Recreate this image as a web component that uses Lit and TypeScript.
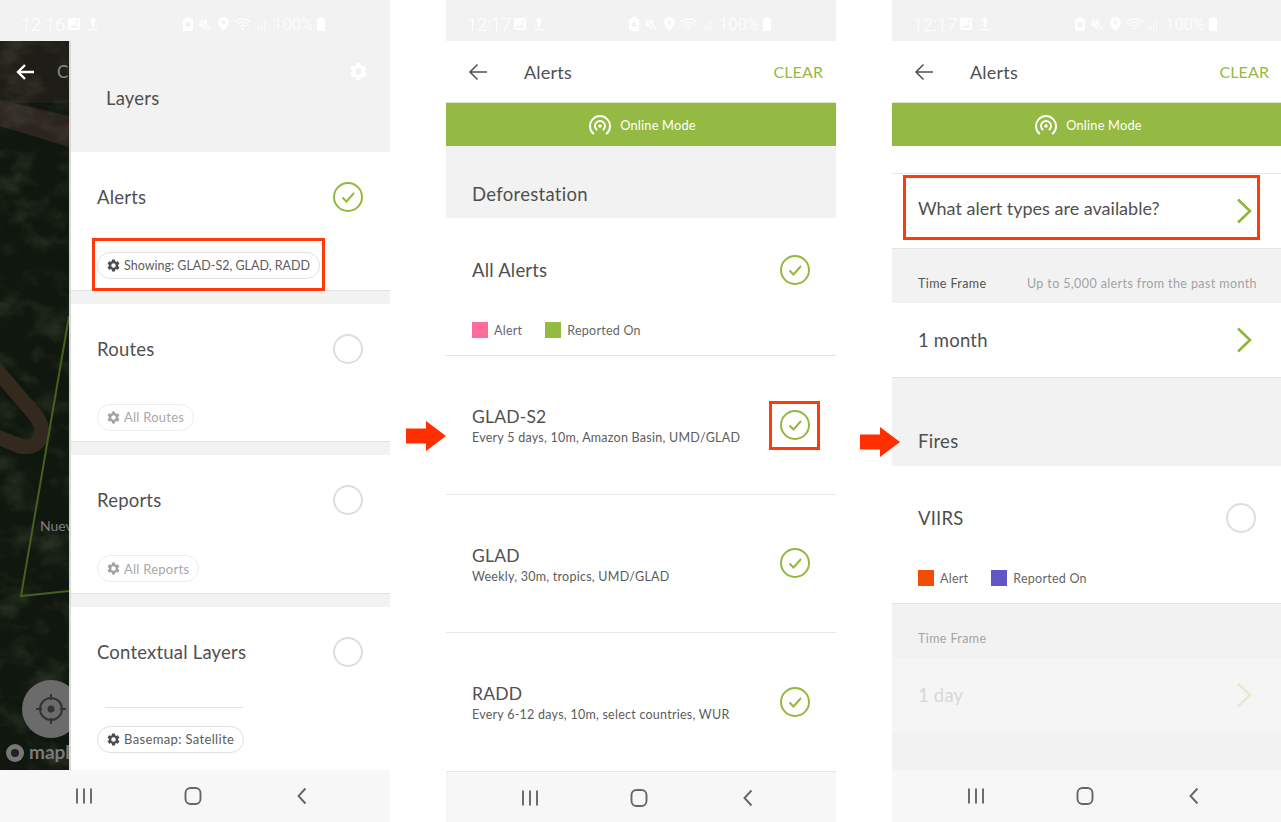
import { LitElement, html, css, svg } from "lit";
import { customElement } from "lit/decorators.js";

const GEAR = "M19.14 12.94c.04-.3.06-.61.06-.94s-.02-.64-.07-.94l2.03-1.58a.5.5 0 0 0 .12-.64l-1.92-3.32a.5.5 0 0 0-.59-.22l-2.39.96a7 7 0 0 0-1.62-.94l-.36-2.54a.48.48 0 0 0-.48-.41h-3.84a.48.48 0 0 0-.47.41l-.36 2.54c-.59.24-1.13.57-1.62.94l-2.39-.96a.49.49 0 0 0-.59.22L2.72 8.84a.48.48 0 0 0 .12.64l2.03 1.58c-.05.3-.09.63-.09.94s.02.64.07.94l-2.03 1.58a.5.5 0 0 0-.12.64l1.92 3.32c.12.22.37.29.59.22l2.39-.96c.5.38 1.03.7 1.62.94l.36 2.54c.05.24.24.41.48.41h3.84c.24 0 .44-.17.47-.41l.36-2.54c.59-.24 1.13-.56 1.62-.94l2.39.96c.22.08.47 0 .59-.22l1.92-3.32a.48.48 0 0 0-.12-.64l-2.01-1.58zM12 15.6A3.6 3.6 0 1 1 12 8.4a3.6 3.6 0 0 1 0 7.2z";

const gear = (cls: string) => html`<svg class=${cls} viewBox="0 0 24 24"><path d=${GEAR} fill="currentColor"></path></svg>`;

const statusBar = (time: string) => html`
  <div class="status">
    <span class="time">${time}</span>
    <svg class="si" style="width:12px" viewBox="0 0 12 12"><path fill-rule="evenodd" d="M1.5 0h9A1.5 1.5 0 0 1 12 1.500v9a1.500 1.500 0 0 1-1.500 1.500h-9A1.500 1.500 0 0 1 0 10.500v-9A1.500 1.500 0 0 1 1.500 0zM1.500 9.800h9L7.600 5.800 5.400 8.400 4 6.800zM9 2a1.200 1.200 0 1 0 0 2.400A1.200 1.200 0 0 0 9 2z" fill="#fff" fill-opacity=".9"></path></svg>
    <svg class="si up" viewBox="0 0 10 14"><path d="M5 0l4 4.500H6.400V10H3.600V4.500H1zM0 12h10v1.200H0z" fill="#fff" fill-opacity=".9"></path></svg>
    <span class="grow"></span>
    <svg class="si" style="width:10px;height:14px" viewBox="0 0 10 14"><path fill-rule="evenodd" d="M3 0h4v1.500h1.500A1.500 1.500 0 0 1 10 3v9.500A1.500 1.500 0 0 1 8.500 14h-7A1.500 1.500 0 0 1 0 12.500V3a1.500 1.500 0 0 1 1.500-1.500H3zM5 5a2.500 2.500 0 1 0 0 5 2.500 2.500 0 0 0 0-5z" fill="#fff" fill-opacity=".9"></path></svg>
    <svg class="si" style="width:13px;height:13px;margin-left:6px" viewBox="0 0 13 13"><path d="M6.500 1.500L3.800 4.200 8 8.600V1.500zM.5 4.500v4h2.700l3.800 3.300 1-.3L2.500 4.500zM1.700.8L.8 1.700l10.500 10.500.9-.9z" fill="#fff" fill-opacity=".9"></path></svg>
    <svg class="si" style="width:11px;height:14px;margin-left:6px" viewBox="0 0 11 14"><path fill-rule="evenodd" d="M5.500 0A5.300 5.300 0 0 1 11 5.300C11 9 5.500 14 5.500 14S0 9 0 5.300A5.300 5.300 0 0 1 5.500 0zm0 3.500a1.900 1.900 0 1 0 0 3.800 1.900 1.900 0 0 0 0-3.800z" fill="#fff" fill-opacity=".9"></path></svg>
    <svg class="si" style="width:17px;height:14px;margin-left:5px" viewBox="0 0 17 14"><g fill="none" stroke="#fff" stroke-opacity=".85" stroke-width="1.200"><path d="M.8 5a11 11 0 0 1 15.400 0"></path><path d="M3 7.500a8 8 0 0 1 11 0"></path><path d="M5.200 9.800a5 5 0 0 1 6.600 0"></path></g><circle cx="8.500" cy="12" r="1.300" fill="#fff" fill-opacity=".85"></circle></svg>
    <svg class="si" style="width:12px;height:13px;margin-left:4px" viewBox="0 0 12 13"><path d="M0 10h1.500v3H0zM3 8h1.500v5H3zM6 5h1.500v8H6zM9 2h1.500v11H9z" fill="#fff" fill-opacity=".55"></path></svg>
    <span class="pct">100%</span>
    <svg class="si" style="width:8px;height:14px;margin-left:4px" viewBox="0 0 8 14"><path d="M2.500 0h3v1.300H7A1 1 0 0 1 8 2.300V13a1 1 0 0 1-1 1H1a1 1 0 0 1-1-1V2.300a1 1 0 0 1 1-1h1.500z" fill="#fff" fill-opacity=".95"></path></svg>
  </div>`;

const navBar = () => html`
  <div class="nav">
    <svg class="nv" viewBox="0 0 18 18"><path d="M2 1.500v15M9 1.500v15M16 1.500v15" stroke="#666" stroke-width="1.900" fill="none"></path></svg>
    <svg class="nv" viewBox="0 0 18 18"><rect x="1.500" y="1" width="15" height="16" rx="5" stroke="#666" stroke-width="1.900" fill="none"></rect></svg>
    <svg class="nv" viewBox="0 0 18 18"><path d="M12.500 1.500L5.500 9l7 7.500" stroke="#666" stroke-width="1.900" fill="none"></path></svg>
  </div>`;

const circle = (on: boolean) => html`
  <svg class="circle" viewBox="0 0 30 30">
    <circle cx="15" cy="15" r="14" fill="#fff" stroke=${on ? "#92b83e" : "#dedede"} stroke-width="2"></circle>
    ${on ? svg`<path d="M9.500 15.500l4 4 7.500-8.500" fill="none" stroke="#92b83e" stroke-width="1.900"></path>` : ""}
  </svg>`;

const chev = (cls = "chev") => html`<svg class=${cls} viewBox="0 0 16 26"><path d="M2 1.500L14 13 2 24.500" fill="none" stroke="currentColor" stroke-width="2.600"></path></svg>`;

const appHeader = () => html`
  <div class="hdr">
    <svg class="back" viewBox="0 0 20 18"><path d="M19 9H2M9.500 1.500L2 9l7.500 7.500" fill="none" stroke="#4f4f4f" stroke-width="1.500"></path></svg>
    <span class="hdr-title">Alerts</span>
    <span class="grow"></span>
    <span class="clear">CLEAR</span>
  </div>
  <div class="online">
    <svg class="wifi" viewBox="0 0 22 20"><g fill="none" stroke="#fff" stroke-width="2" stroke-linecap="round"><path d="M4.300 18.500a10 10 0 1 1 13.400 0"></path><path d="M7.500 14.500a5 5 0 1 1 7 0"></path></g><circle cx="11" cy="11" r="1.800" fill="#fff"></circle></svg>
    <span>Online Mode</span>
  </div>`;

const layerSection = (title: string, on: boolean, chip: string, dim: boolean, rule = false) => html`
  <section class="layer">
    <div class="layer-row"><span class="t19">${title}</span>${circle(on)}</div>
    ${rule ? html`<div class="rule"></div>` : ""}
    <div class="chip ${dim ? "dim" : ""} ${rule ? "low" : ""}">${gear("chip-gear")}<span>${chip}</span></div>
  </section>`;

const alertRow = (title: string, sub: string) => html`
  <div class="alert-row">
    <div class="col"><span class="t19 lh">${title}</span><span class="sub">${sub}</span></div>
    ${circle(true)}
  </div>`;

const legend = (a: string, b: string) => html`
  <div class="legend">
    <i style="background:${a}"></i><span class="lab">Alert</span>
    <i class="second" style="background:${b}"></i><span class="lab">Reported On</span>
  </div>`;

const arrow = (cls: string) => html`<svg class="arrow ${cls}" viewBox="0 0 40 30"><path d="M0 7.500h20V0l20 15-20 15v-7.500H0z" fill="#ff2f00"></path></svg>`;

@customElement("app-root")
export class AppRoot extends LitElement {
  static styles = css`
    :host { display: block; width: 1281px; height: 822px; overflow: hidden; background: #fff; position: relative;
      font-family: Lato, "Noto Sans", sans-serif; color: #505050; }
    .page { display: flex; gap: 56px; width: 1281px; height: 822px; }
    .phone { width: 390px; flex: 0 0 390px; height: 822px; display: flex; flex-direction: column; background: #f2f2f2; position: relative; overflow: hidden; }
    .grow { flex: 1; }
    .status { height: 41px; flex: none; display: flex; align-items: center; padding: 7px 65px 0 21px; box-sizing: border-box; background: #f2f2f2; color: #fff; }
    .time { font: 300 18px Roboto, sans-serif; letter-spacing: .1px; width: 47px; opacity: .95; }
    .pct { font: 300 16.500px Roboto, sans-serif; margin-left: 6px; opacity: .95; }
    .si { height: 12px; flex: none; display: block; }
    .up { width: 10px; height: 14px; margin-left: 8px; }
    .nav { height: 52px; flex: none; background: #f7f7f7; position: relative; display: flex; padding-left: 75px; gap: 91px; align-items: center; box-sizing: border-box; }
    .nv { width: 18px; height: 18px; display: block; }
    .body { flex: 1; display: flex; min-height: 0; }
    .map { width: 69px; flex: none; position: relative; background: #121a10; overflow: hidden; }
    .map svg { display: block; }
    .panel { flex: 1; border-left: 2px solid #d9d9d9; display: flex; flex-direction: column; min-width: 0; }
    .layers-wrap { flex: 1; display: flex; flex-direction: column; gap: 13px; min-height: 0; }
    .layers-top { height: 98px; flex: none; position: relative; }
    .layers-title { position: absolute; left: 35px; top: 43px; font-size: 18.500px; line-height: 28px; letter-spacing: .2px; }
    .top-gear { position: absolute; left: 277px; top: 20px; width: 21px; height: 21px; color: #fff; }
    .t19 { font-size: 18.500px; letter-spacing: .2px; line-height: 26px; color: #505050; }
    .layer { height: 138.600px; flex: none; background: #fff; border-bottom: 1.500px solid #e2e2e2; box-sizing: border-box; padding: 0 27px 0 26px; display: flex; flex-direction: column; position: relative; }
    .layer:last-child { flex: 1; height: auto; border-bottom: 0; }
    .layer-row { height: 90px; display: flex; justify-content: space-between; align-items: center; flex: none; }
    .circle { width: 30px; height: 30px; flex: none; display: block; }
    .chip { align-self: flex-start; height: 27px; box-sizing: border-box; margin-top: 10px; border: 1.500px solid #e0e0e0; border-radius: 14px; padding: 0 9px 0 8px; display: flex; align-items: center; gap: 3px; font-size: 12.500px; letter-spacing: 0; color: #5c5c5c; background: #fff; white-space: nowrap; }
    .chip.low { margin-top: 29px; font-size: 13px; letter-spacing: .35px; }
    .chip.dim { color: #a8a8a8; border-color: #ececec; font-size: 13px; letter-spacing: .25px; }
    .chip-gear { width: 15px; height: 15px; flex: none; color: #4c4c4c; }
    .dim .chip-gear { color: #a3a3a3; }
    .rule { position: absolute; left: 34px; top: 100px; width: 138px; height: 1px; background: #e4e4e4; }
    .hdr { height: 61px; flex: none; background: #fff; display: flex; align-items: center; padding: 0 13px 0 22px; border-bottom: 1px solid #dfe8c8; }
    .back { width: 20px; height: 18px; flex: none; }
    .hdr-title { font-size: 18px; margin-left: 36px; letter-spacing: .2px; }
    .clear { font-size: 16px; color: #94ba44; letter-spacing: .1px; }
    .online { height: 43px; flex: none; background: #94ba44; display: flex; align-items: center; justify-content: center; gap: 9px; color: #fff; font-size: 12.800px; letter-spacing: .2px; box-sizing: border-box; padding-left: 3px; }
    .wifi { width: 22px; height: 20px; }
    .group { height: 72px; flex: none; box-sizing: border-box; padding: 34px 0 0 26px; font-size: 18.500px; line-height: 28px; letter-spacing: .3px; }
    .all { height: 138px; flex: none; background: #fff; border-bottom: 1.500px solid #e2e2e2; box-sizing: border-box; padding: 0 26px; }
    .row-head { height: 104px; display: flex; align-items: center; justify-content: space-between; }
    .legend { display: flex; align-items: center; font-size: 12.500px; letter-spacing: .25px; color: #666; }
    .legend i { width: 16px; height: 16px; display: block; flex: none; }
    .legend .lab { margin-left: 6px; }
    .legend .second { margin-left: 23px; }
    .alert-row { height: 138.600px; flex: none; background: #fff; border-bottom: 1.500px solid #e6e6e6; box-sizing: border-box; padding: 0 26px; display: flex; align-items: center; justify-content: space-between; }
    .alert-row:last-child { border-bottom: 0; flex: 1; height: auto; }
    .col { display: flex; flex-direction: column; margin-top: 4px; }
    .lh { line-height: 22px; font-size: 17.500px; }
    .sub { font-size: 12.500px; letter-spacing: .25px; line-height: 19px; color: #5c5c5c; }
    .white-gap { height: 27px; flex: none; background: #fff; border-bottom: 1px solid #e6e6e6; }
    .link-row { height: 75px; flex: none; background: #fff; border-bottom: 1.500px solid #e2e2e2; box-sizing: border-box; display: flex; align-items: center; justify-content: space-between; padding: 0 30px 0 26px; color: #505050; }
    .link-row.up-text .t19 { margin-top: -6px; font-size: 18px; letter-spacing: 0; }
    .link-row.off { background: #f5f5f5; border-bottom: 0; height: 73px; }
    .link-row.off .t19 { color: #d8d8d8; }
    .link-row.off .chev { color: #e4ecd0; }
    .chev { width: 16px; height: 26px; color: #8fb63a; flex: none; }
    .frame-head { height: 54px; flex: none; box-sizing: border-box; padding: 15px 25px 0 26px; display: flex; align-items: center; justify-content: space-between; font-size: 12.500px; letter-spacing: .4px; }
    .frame-head b { font-weight: 400; color: #555; }
    .frame-head span { color: #a2a2a2; }
    .frame-head.faint b { color: #a4a4a4; }
    .fires { height: 88px; flex: none; box-sizing: border-box; padding: 50px 0 0 26px; font-size: 18.500px; line-height: 26px; letter-spacing: .3px; }
    .spacer { flex: 1; }
    .mark { position: absolute; border: 3px solid #ff3a0a; box-sizing: border-box; pointer-events: none; }
    .m1 { left: 92px; top: 238px; width: 233px; height: 53px; }
    .m2 { left: 323px; top: 401px; width: 51px; height: 49px; }
    .m3 { left: 11px; top: 175px; width: 357px; height: 65px; }
    .arrow { position: absolute; width: 40px; height: 30px; }
    .a1 { left: 406px; top: 421px; }
    .a2 { left: 860px; top: 427px; }
  `;

  render() {
    return html`
      <div class="page">
        <div class="phone">
          ${statusBar("12:16")}
          <div class="body">
            <div class="map">
              <svg width="69" height="729" viewBox="0 41 69 729">
                <defs>
                  <filter id="sat" x="0" y="0" width="100%" height="100%">
                    <feTurbulence type="fractalNoise" baseFrequency=".03 .04" numOctaves="4" seed="7"></feTurbulence>
                    <feColorMatrix type="matrix" values="0 0 0 0 .24  0 0 0 0 .28  0 0 0 0 .16  1.800 0 0 0 -.8"></feColorMatrix>
                  </filter>
                </defs>
                <rect x="0" y="41" width="69" height="729" fill="#0f170e"></rect>
                <rect x="0" y="41" width="69" height="62" fill="#1f1d17"></rect>
                <path d="M0 100L69 116V147L0 126z" fill="#2c251f"></path>
                <rect x="0" y="41" width="69" height="729" filter="url(#sat)" opacity=".28"></rect>
                <path d="M-5 368L36 416C50 436 36 450 20 446L-5 436" fill="none" stroke="#33291f" stroke-width="15"></path>
                <path d="M69 316L21 596L69 591" fill="none" stroke="#45601f" stroke-width="2"></path>
                <path d="M18 72h16M25 65l-7 7 7 7" fill="none" stroke="#fff" stroke-width="2.400"></path>
                <text x="57" y="78" font-family="Lato, sans-serif" font-size="17" fill="#8b8b8b">Cu</text>
                <text x="40" y="531" font-family="Lato, sans-serif" font-size="14" fill="#7f7f7f">Nuev</text>
                <circle cx="51" cy="709" r="29" fill="#6b6b6b"></circle>
                <g fill="none" stroke="#333" stroke-width="2"><circle cx="51" cy="709" r="11"></circle><path d="M51 694v6M51 718v6M36 709h6M60 709h6"></path></g>
                <circle cx="51" cy="709" r="3.500" fill="#333"></circle>
                <circle cx="15" cy="753" r="9" fill="#777"></circle>
                <circle cx="15" cy="753" r="4" fill="#222"></circle>
                <text x="29" y="759" font-family="Lato, sans-serif" font-size="19" font-weight="700" fill="#7a7a7a">mapl</text>
              </svg>
            </div>
            <div class="panel">
              <div class="layers-wrap">
                <div class="layers-top">
                  ${gear("top-gear")}
                  <span class="layers-title">Layers</span>
                </div>
                ${layerSection("Alerts", true, "Showing: GLAD-S2, GLAD, RADD", false)}
                ${layerSection("Routes", false, "All Routes", true)}
                ${layerSection("Reports", false, "All Reports", true)}
                ${layerSection("Contextual Layers", false, "Basemap: Satellite", false, true)}
              </div>
            </div>
          </div>
          ${navBar()}
          <div class="mark m1"></div>
        </div>

        <div class="phone">
          ${statusBar("12:17")}
          ${appHeader()}
          <div class="group">Deforestation</div>
          <div class="all">
            <div class="row-head"><span class="t19">All Alerts</span>${circle(true)}</div>
            ${legend("#ff6b9a", "#94ba44")}
          </div>
          ${alertRow("GLAD-S2", "Every 5 days, 10m, Amazon Basin, UMD/GLAD")}
          ${alertRow("GLAD", "Weekly, 30m, tropics, UMD/GLAD")}
          ${alertRow("RADD", "Every 6-12 days, 10m, select countries, WUR")}
          ${navBar()}
          <div class="mark m2"></div>
        </div>

        <div class="phone">
          ${statusBar("12:17")}
          ${appHeader()}
          <div class="white-gap"></div>
          <div class="link-row up-text"><span class="t19">What alert types are available?</span>${chev()}</div>
          <div class="frame-head"><b>Time Frame</b><span>Up to 5,000 alerts from the past month</span></div>
          <div class="link-row"><span class="t19">1 month</span>${chev()}</div>
          <div class="fires">Fires</div>
          <div class="all">
            <div class="row-head"><span class="t19">VIIRS</span>${circle(false)}</div>
            ${legend("#f04e05", "#6256c4")}
          </div>
          <div class="frame-head faint"><b>Time Frame</b></div>
          <div class="link-row off"><span class="t19">1 day</span>${chev()}</div>
          <div class="spacer"></div>
          ${navBar()}
          <div class="mark m3"></div>
        </div>
      </div>
      ${arrow("a1")}${arrow("a2")}
    `;
  }
}
